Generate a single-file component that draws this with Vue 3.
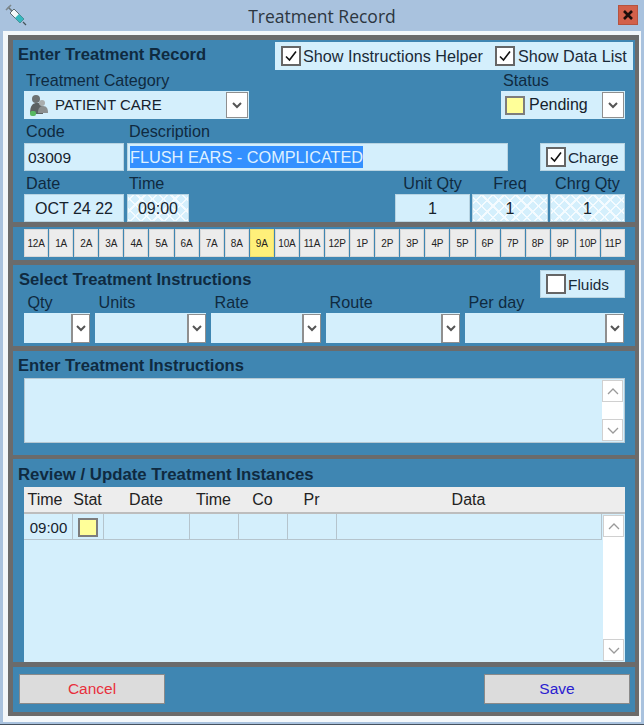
<script setup>
const hours = [
  "12A", "1A", "2A", "3A", "4A", "5A", "6A", "7A", "8A", "9A", "10A", "11A",
  "12P", "1P", "2P", "3P", "4P", "5P", "6P", "7P", "8P", "9P", "10P", "11P",
];
const activeHour = "9A";
const instructionFields = [
  { label: "Qty", cls: "f-qty" },
  { label: "Units", cls: "f-units" },
  { label: "Rate", cls: "f-rate" },
  { label: "Route", cls: "f-route" },
  { label: "Per day", cls: "f-perday" },
];
const columns = ["Time", "Stat", "Date", "Time", "Co", "Pr", "Data"];
</script>

<template>
  <div class="window">
    <div class="titlebar">
      <svg class="app-icon" width="22" height="22" viewBox="0 0 22 22">
        <path d="M3 3 L7 7" stroke="#6a7478" stroke-width="1.6" />
        <path d="M1 6 L6 1" stroke="#7d878b" stroke-width="1.6" />
        <path d="M5 9 L9 5 L19 15 L15 19 Z" fill="#f2f8f9" stroke="#5c6c72" stroke-width="1" />
        <path d="M10 14 L14 10 L19 15 L15 19 Z" fill="#35b8bf" />
        <path d="M18 18 L21 21" stroke="#46565c" stroke-width="1.2" />
      </svg>
      <span class="window-title">Treatment Record</span>
      <button class="close-btn">
        <svg width="10" height="10" viewBox="0 0 10 10">
          <path d="M1 1 L9 9 M9 1 L1 9" stroke="#1c0d0a" stroke-width="2.6" />
        </svg>
      </button>
    </div>

    <div class="client">
      <div class="frame">
        <section class="sec sec-record">
          <div class="row-head">
            <div class="sec-title">Enter Treatment Record</div>
            <div class="helpers">
              <span class="check on">
                <svg width="14" height="14" viewBox="0 0 14 14"><path d="M2 7.5 L5.5 11 L12 2.5" fill="none" stroke="#111" stroke-width="1.6" /></svg>
              </span>
              <span class="check-text">Show Instructions Helper</span>
              <span class="check on second">
                <svg width="14" height="14" viewBox="0 0 14 14"><path d="M2 7.5 L5.5 11 L12 2.5" fill="none" stroke="#111" stroke-width="1.6" /></svg>
              </span>
              <span class="check-text">Show Data List</span>
            </div>
          </div>

          <div class="row row-cat">
            <div class="field w-cat">
              <label class="lbl">Treatment Category</label>
              <div class="box select">
                <svg class="cat-icon" width="20" height="22" viewBox="0 0 20 22">
                  <circle cx="7" cy="5" r="4" fill="#6d7272" />
                  <path d="M1 20 C1 11 4 9 8 9 C12 9 14 11 14 20 Z" fill="#5c6262" />
                  <circle cx="13" cy="9" r="3" fill="#a9adad" />
                  <path d="M9 19 C9 14 11 12 14 12 C18 12 19 15 19 19 Z" fill="#8b8f8f" />
                  <rect x="1" y="17" width="6" height="5" rx="2" fill="#58b860" />
                </svg>
                <span class="val cat-val">PATIENT CARE</span>
                <span class="arrow">
                  <svg width="10" height="7" viewBox="0 0 10 7"><path d="M1 1 L5 5 L9 1" fill="none" stroke="#555" stroke-width="2" /></svg>
                </span>
              </div>
            </div>
            <div class="field w-status">
              <label class="lbl">Status</label>
              <div class="box select status-select">
                <span class="swatch"></span>
                <span class="val">Pending</span>
                <span class="arrow">
                  <svg width="10" height="7" viewBox="0 0 10 7"><path d="M1 1 L5 5 L9 1" fill="none" stroke="#555" stroke-width="2" /></svg>
                </span>
              </div>
            </div>
          </div>

          <div class="row row-code">
            <div class="field w-code">
              <label class="lbl">Code</label>
              <div class="box text code-val">03009</div>
            </div>
            <div class="field w-desc">
              <label class="lbl">Description</label>
              <div class="box text desc"><span class="selected">FLUSH EARS - COMPLICATED</span></div>
            </div>
            <div class="box charge">
              <span class="check on">
                <svg width="14" height="14" viewBox="0 0 14 14"><path d="M2 7.5 L5.5 11 L12 2.5" fill="none" stroke="#111" stroke-width="1.6" /></svg>
              </span>
              <span class="check-text">Charge</span>
            </div>
          </div>

          <div class="row row-date">
            <div class="field w-code">
              <label class="lbl">Date</label>
              <div class="box text center">OCT 24 22</div>
            </div>
            <div class="field w-time">
              <label class="lbl">Time</label>
              <div class="box text center hatch">09:00</div>
            </div>
            <div class="field w-qty push">
              <label class="lbl center">Unit Qty</label>
              <div class="box text center">1</div>
            </div>
            <div class="field w-freq">
              <label class="lbl center">Freq</label>
              <div class="box text center hatch">1</div>
            </div>
            <div class="field w-qty">
              <label class="lbl center">Chrg Qty</label>
              <div class="box text center hatch">1</div>
            </div>
          </div>
        </section>

        <section class="sec sec-hours">
          <div class="hours">
            <button v-for="h in hours" :key="h" class="hour" :class="{ active: h === activeHour }">{{ h }}</button>
          </div>
        </section>

        <section class="sec sec-select">
          <div class="row-fluids">
            <div class="sec-title">Select Treatment Instructions</div>
            <div class="box charge fluids">
              <span class="check"></span>
              <span class="check-text">Fluids</span>
            </div>
          </div>
          <div class="row-combos">
            <div v-for="f in instructionFields" :key="f.label" class="field" :class="f.cls">
              <label class="lbl">{{ f.label }}</label>
              <div class="box select">
                <span class="val"></span>
                <span class="arrow tall">
                  <svg width="10" height="7" viewBox="0 0 10 7"><path d="M1 1 L5 5 L9 1" fill="none" stroke="#555" stroke-width="2" /></svg>
                </span>
              </div>
            </div>
          </div>
        </section>

        <section class="sec sec-notes">
          <div class="sec-title">Enter Treatment Instructions</div>
          <div class="notes">
            <div class="notes-text"></div>
            <div class="scrollbar">
              <span class="sb-btn">
                <svg width="12" height="7" viewBox="0 0 12 7"><path d="M1 6 L6 1 L11 6" fill="none" stroke="#9a9a9a" stroke-width="1.3" /></svg>
              </span>
              <span class="sb-track"></span>
              <span class="sb-btn">
                <svg width="12" height="7" viewBox="0 0 12 7"><path d="M1 1 L6 6 L11 1" fill="none" stroke="#9a9a9a" stroke-width="1.3" /></svg>
              </span>
            </div>
          </div>
        </section>

        <section class="sec sec-review">
          <div class="sec-title">Review / Update Treatment Instances</div>
          <div class="table">
            <div class="thead cols">
              <span v-for="(c, i) in columns" :key="i">{{ c }}</span>
            </div>
            <div class="tbody">
              <div class="rows">
                <div class="tr cols">
                  <span class="td">09:00</span>
                  <span class="td"><span class="swatch small"></span></span>
                  <span class="td"></span>
                  <span class="td"></span>
                  <span class="td"></span>
                  <span class="td"></span>
                  <span class="td"></span>
                </div>
              </div>
              <div class="scrollbar">
                <span class="sb-btn">
                  <svg width="12" height="7" viewBox="0 0 12 7"><path d="M1 6 L6 1 L11 6" fill="none" stroke="#9a9a9a" stroke-width="1.3" /></svg>
                </span>
                <span class="sb-track"></span>
                <span class="sb-btn">
                  <svg width="12" height="7" viewBox="0 0 12 7"><path d="M1 1 L6 6 L11 1" fill="none" stroke="#9a9a9a" stroke-width="1.3" /></svg>
                </span>
              </div>
            </div>
          </div>
        </section>

        <section class="sec sec-actions">
          <button class="action cancel">Cancel</button>
          <button class="action save">Save</button>
        </section>
      </div>
    </div>
  </div>
</template>

<style>
html,
body {
  margin: 0;
  padding: 0;
}
</style>

<style scoped>
.window {
  width: 644px;
  height: 725px;
  box-sizing: border-box;
  background: #a9c2de;
  border-bottom: 1px solid #46525e;
  display: flex;
  flex-direction: column;
  font-family: "Liberation Sans", Arial, sans-serif;
  font-size: 16px;
  color: #0f2a40;
  overflow: hidden;
}

.titlebar {
  height: 31px;
  flex: none;
  position: relative;
  display: flex;
  align-items: center;
  justify-content: center;
}

.app-icon {
  position: absolute;
  left: 5px;
  top: 4px;
}

.window-title {
  font-family: "Open Sans", sans-serif;
  font-size: 17.5px;
  color: #2c3640;
  margin-top: 1px;
}

.close-btn {
  position: absolute;
  left: 618px;
  top: 5px;
  width: 20px;
  height: 20px;
  padding: 0;
  border: 1px solid #b5533f;
  background: #d2604a;
  display: flex;
  align-items: center;
  justify-content: center;
}

.client {
  flex: 1;
  margin: 0 3px 2px;
  background: #f3f7fa;
  padding: 4px 3px 6px 5px;
  display: flex;
}

.frame {
  flex: 1;
  border: solid #6b6b6b;
  border-width: 5px 4px 4px 5px;
  background: #3f86b2;
  display: flex;
  flex-direction: column;
}

.sec {
  padding: 0 10px 0 11px;
  border-bottom: 5px solid #6b6b6b;
  flex: none;
}

.sec-title {
  font-size: 16.6px;
  font-weight: bold;
  color: #0f2a40;
  white-space: nowrap;
}

.row-head {
  display: flex;
  justify-content: space-between;
  margin: 0 -8px 0 -6px;
  padding-top: 2px;
}

.row-head .sec-title {
  line-height: 26px;
}

.helpers {
  height: 28px;
  width: 358px;
  box-sizing: border-box;
  padding-left: 6px;
  background: #d4effc;
  display: flex;
  align-items: center;
}

.check {
  width: 20px;
  height: 20px;
  box-sizing: border-box;
  flex: none;
  border: 2px solid #666;
  background: #fff;
  display: flex;
  align-items: center;
  justify-content: center;
}

.check.second {
  margin-left: 12px;
}

.check-text {
  margin-left: 2px;
  color: #1a2a38;
  white-space: nowrap;
}

.helpers .check-text {
  margin-left: 3px;
  font-size: 16.2px;
}

.helpers .check-text:nth-child(2) {
  margin-left: 2px;
}

.row {
  display: flex;
}

.field {
  display: flex;
  flex-direction: column;
}

.lbl {
  padding-left: 2px;
  font-size: 16.2px;
  white-space: nowrap;
}

.lbl.center {
  padding-left: 0;
  text-align: center;
}

.row-cat {
  justify-content: space-between;
}

.row-cat .lbl {
  height: 21px;
  line-height: 20px;
}

.row-code .lbl {
  height: 24px;
  line-height: 25px;
}

.row-date .lbl {
  height: 23px;
  line-height: 24px;
}

.w-cat {
  width: 225px;
}

.w-status {
  width: 124px;
}

.w-code {
  width: 100px;
}

.w-desc {
  width: 381px;
  margin-left: 3px;
}

.w-time {
  width: 62px;
  margin-left: 3px;
}

.w-qty {
  width: 75px;
}

.w-freq {
  width: 76px;
  margin: 0 2px;
}

.push {
  margin-left: auto;
}

.box {
  height: 28px;
  box-sizing: border-box;
  background: #d4effc;
  color: #16222c;
}

.text {
  padding: 1px 4px 0;
  border: 1px solid #b8d4e2;
  line-height: 26px;
  white-space: nowrap;
}

.text.center {
  text-align: center;
}

.code-val {
  padding-left: 3px;
  font-size: 15.5px;
}

.desc {
  padding: 2px 0 0 2px;
  font-size: 16.3px;
  line-height: 22px;
}

.selected {
  display: inline-block;
  height: 22px;
  background: #3390ff;
  color: #dff0ff;
}

.hatch {
  background-color: #d4effc;
  background-image:
    repeating-linear-gradient(45deg, #f4fbff 0 1.5px, transparent 1.5px 8px),
    repeating-linear-gradient(-45deg, #f4fbff 0 1.5px, transparent 1.5px 8px);
}

.select {
  display: flex;
  align-items: center;
  padding-left: 5px;
  padding-right: 1px;
}

.select .val {
  flex: 1;
  white-space: nowrap;
}

.select .cat-val {
  font-size: 15px;
  margin-top: -2px;
}

.status-select {
  padding-left: 4px;
}

.cat-icon {
  flex: none;
  margin-right: 6px;
}

.arrow {
  width: 22px;
  height: 26px;
  box-sizing: border-box;
  flex: none;
  border: 1px solid #8f8f8f;
  background: #fff;
  display: flex;
  align-items: center;
  justify-content: center;
}

.swatch {
  width: 20px;
  height: 19px;
  box-sizing: border-box;
  flex: none;
  margin-right: 4px;
  border: 2px solid #7d7d7d;
  background: #ffff99;
}

.charge {
  width: 85px;
  margin-left: auto;
  align-self: flex-end;
  padding-left: 5px;
  display: flex;
  align-items: center;
  border: 1px solid #b8d4e2;
}

.charge .check-text {
  padding-top: 1px;
  font-size: 15.4px;
}

.sec-hours {
  padding-top: 2px;
  height: 38px;
  box-sizing: border-box;
}

.hours {
  display: grid;
  grid-template-columns: repeat(24, 1fr);
  gap: 1px;
  height: 28px;
}

.hour {
  padding: 0;
  border: 1px solid #d8d8d8;
  background: #ececec;
  color: #222;
  font-family: "Liberation Sans", Arial, sans-serif;
  font-size: 10px;
  letter-spacing: -0.2px;
}

.hour.active {
  background: #fff07a;
  border-color: #f0e070;
}

.sec-select {
  height: 86px;
  box-sizing: border-box;
  padding-top: 5px;
}

.row-fluids {
  display: flex;
  justify-content: space-between;
}

.row-fluids .sec-title {
  margin-left: -5px;
  line-height: 20px;
}

.fluids {
  flex: none;
}

.row-combos {
  display: flex;
  gap: 5px;
  margin-top: -6px;
}

.row-combos .lbl {
  height: 21px;
  line-height: 20px;
  padding-left: 3.5px;
}

.row-combos .box {
  height: 30px;
  padding: 0;
}

.arrow.tall {
  width: 19px;
  height: 29px;
  border-width: 1px 1px 1px 2px;
}

.f-qty {
  width: 66px;
}

.f-units {
  width: 111px;
}

.f-rate {
  width: 110px;
}

.f-route {
  width: 134px;
}

.f-perday {
  width: 159px;
}

.sec-notes {
  height: 108px;
  box-sizing: border-box;
  border-bottom-width: 4px;
}

.sec-notes .sec-title {
  margin-left: -6px;
  height: 27px;
  line-height: 29px;
}

.notes {
  height: 65px;
  box-sizing: border-box;
  border: 1px solid #b6c8d2;
  background: #d4effc;
  display: flex;
}

.notes-text {
  flex: 1;
}

.scrollbar {
  width: 21px;
  flex: none;
  margin: 1px;
  background: #fff;
  display: flex;
  flex-direction: column;
}

.sb-btn {
  height: 20px;
  flex: none;
  border: 1px solid #d0d0d0;
  display: flex;
  align-items: center;
  justify-content: center;
}

.sb-track {
  flex: 1;
}

.sec-review {
  height: 208px;
  box-sizing: border-box;
  display: flex;
  flex-direction: column;
}

.sec-review .sec-title {
  margin-left: -6px;
  line-height: 31px;
  height: 28px;
  flex: none;
  font-size: 16.8px;
}

.table {
  flex: 1;
  display: flex;
  flex-direction: column;
  min-height: 0;
}

.cols {
  display: grid;
  grid-template-columns: 48px 31px 86px 49px 49px 49px 265px;
}

.thead {
  height: 27px;
  box-sizing: border-box;
  flex: none;
  background: #ededed;
  border-bottom: 2px solid #bdbdbd;
  color: #222;
  font-size: 16px;
  line-height: 26px;
}

.thead span {
  text-align: center;
}

.thead span:first-child {
  padding-right: 6px;
}

.tbody {
  flex: 1;
  display: flex;
  background: #d4effc;
  min-height: 0;
}

.rows {
  flex: 1;
}

.tr {
  height: 26px;
  box-sizing: border-box;
  padding-left: 1px;
  border-bottom: 1px solid #b5c4cd;
}

.td {
  border-right: 1px solid #b5c4cd;
  display: flex;
  align-items: center;
  justify-content: center;
  font-size: 15px;
  padding-top: 1px;
  color: #16222c;
}

.swatch.small {
  margin: 0;
}

.sec-actions {
  flex: 1;
  border-bottom: 0;
  padding: 7px 5px 0 6px;
  display: flex;
  justify-content: space-between;
  align-items: flex-start;
}

.action {
  width: 146px;
  height: 30px;
  border: 1px solid #8a8a8a;
  background: #dcdcdc;
  font-family: "Liberation Sans", Arial, sans-serif;
  font-size: 15.5px;
}

.cancel {
  color: #e8303c;
}

.save {
  color: #2a20d0;
}
</style>
